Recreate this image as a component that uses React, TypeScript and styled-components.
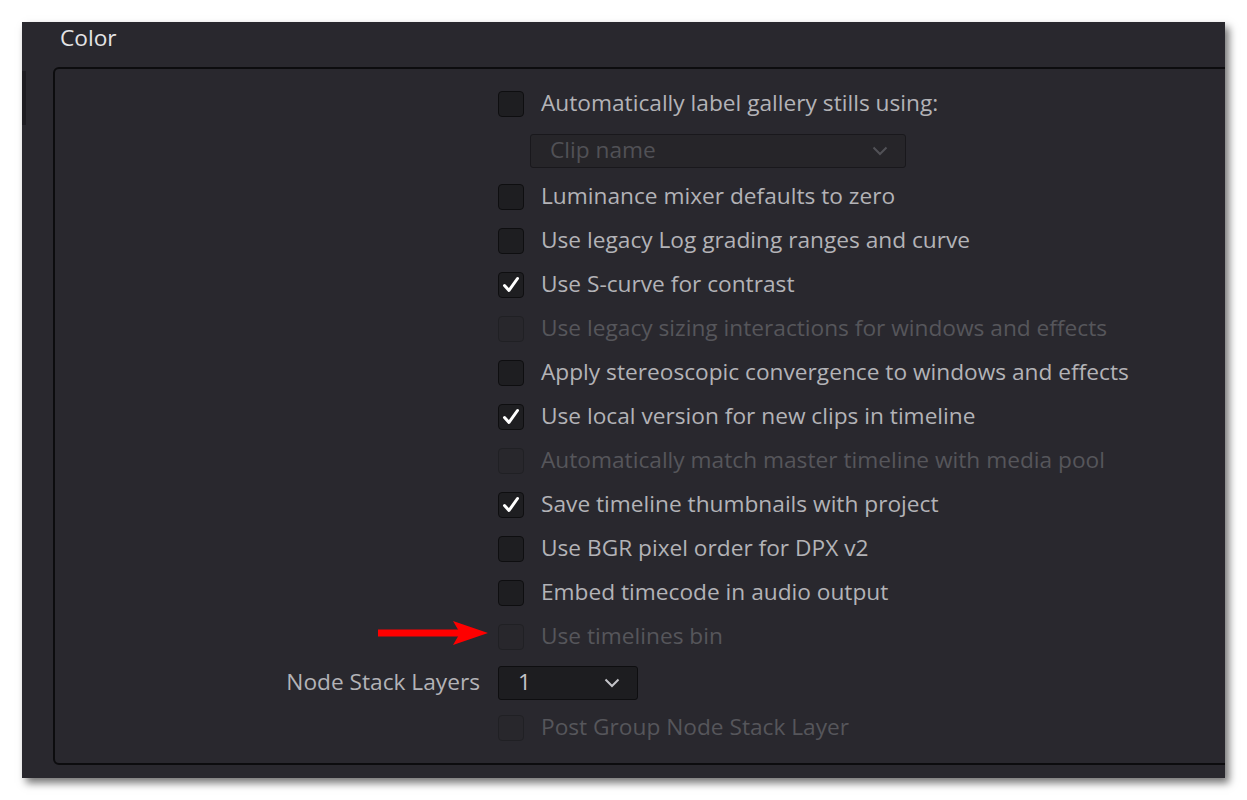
import React from "react";
import styled, { createGlobalStyle } from "styled-components";

const GlobalStyle = createGlobalStyle`
  html, body {
    margin: 0;
    padding: 0;
    background: #ffffff;
  }
  body {
    font-family: "Open Sans", "Noto Sans", sans-serif;
  }
`;

const Page = styled.div`
  width: 1247px;
  height: 800px;
  padding: 22px 0 0 22px;
  box-sizing: border-box;
`;

const Panel = styled.div`
  width: 1203px;
  height: 756px;
  background: #29282e;
  box-shadow: 4px 5px 8px rgba(0, 0, 0, 0.55);
  display: flex;
  overflow: hidden;
`;

const Strip = styled.div`
  width: 4px;
  height: 54px;
  margin-top: 49px;
  background: #1d1c21;
  flex-shrink: 0;
`;

const Main = styled.div`
  flex: 1;
  margin-left: 27px;
  display: flex;
  flex-direction: column;
`;

const Title = styled.div`
  height: 45px;
  padding-left: 7px;
  box-sizing: border-box;
  font-size: 22.7px;
  line-height: 31px;
  color: #e4e4e6;
`;

const Box = styled.div`
  width: calc(100% + 20px);
  height: 698px;
  box-sizing: border-box;
  border: 2px solid #0c0c0e;
  border-radius: 6px;
  padding-top: 13px;
  display: grid;
  grid-template-columns: 425px 1fr;
  column-gap: 18px;
  align-content: start;
`;

const Label = styled.div`
  font-size: 22.7px;
  line-height: 30px;
  color: #b3b3b7;
  text-align: right;
  align-self: center;
  margin-top: -2px;
`;

const Row = styled.div<{ $h?: number }>`
  grid-column: 2;
  height: ${(p) => p.$h ?? 44}px;
  display: flex;
  align-items: center;
  position: relative;
`;

const Tick = styled.span<{ $disabled?: boolean }>`
  width: 26px;
  height: 26px;
  box-sizing: border-box;
  border-radius: 4px;
  background: ${(p) => (p.$disabled ? "#28272c" : "#1e1e21")};
  border: 1px solid ${(p) => (p.$disabled ? "#202024" : "#0e0e10")};
  display: flex;
  align-items: center;
  justify-content: center;
  flex-shrink: 0;
`;

const Text = styled.span<{ $disabled?: boolean }>`
  margin-left: 17px;
  font-size: 22.7px;
  line-height: 30px;
  margin-top: -2px;
  white-space: nowrap;
  color: ${(p) => (p.$disabled ? "#56565b" : "#b3b3b7")};
`;

const Select = styled.div<{ $w: number; $dim?: boolean }>`
  width: ${(p) => p.$w}px;
  height: 34px;
  box-sizing: border-box;
  border: 1px solid ${(p) => (p.$dim ? "#19181c" : "#0e0e10")};
  border-radius: 3px;
  background: ${(p) => (p.$dim ? "#262529" : "#1d1d20")};
  display: flex;
  align-items: center;
  justify-content: space-between;
  padding: 0 17px 0 19px;
  font-size: 22.7px;
  line-height: 30px;
  color: ${(p) => (p.$dim ? "#515156" : "#c4c4c8")};
  span {
    margin-top: -2px;
  }
`;

const Indent = styled.div`
  margin-left: 32px;
`;

const Arrow = styled.svg`
  position: absolute;
  left: -120px;
  top: 5px;
`;

const Check = () => (
  <svg width="18" height="18" viewBox="0 0 18 18">
    <path
      d="M2.5 9.5 L7 14.5 L15.5 2.5"
      fill="none"
      stroke="#ffffff"
      strokeWidth="3"
      strokeLinecap="round"
      strokeLinejoin="round"
    />
  </svg>
);

const Chevron = ({ color }: { color: string }) => (
  <svg width="16" height="10" viewBox="0 0 16 10">
    <path d="M1.5 1.5 L8 8 L14.5 1.5" fill="none" stroke={color} strokeWidth="2" />
  </svg>
);

type Item = { label: string; checked?: boolean; disabled?: boolean };

const Option: React.FC<Item & { children?: React.ReactNode }> = ({
  label,
  checked,
  disabled,
  children,
}) => (
  <Row>
    {children}
    <Tick $disabled={disabled}>{checked && <Check />}</Tick>
    <Text $disabled={disabled}>{label}</Text>
  </Row>
);

const middle: Item[] = [
  { label: "Luminance mixer defaults to zero" },
  { label: "Use legacy Log grading ranges and curve" },
  { label: "Use S-curve for contrast", checked: true },
  { label: "Use legacy sizing interactions for windows and effects", disabled: true },
  { label: "Apply stereoscopic convergence to windows and effects" },
  { label: "Use local version for new clips in timeline", checked: true },
  { label: "Automatically match master timeline with media pool", disabled: true },
  { label: "Save timeline thumbnails with project", checked: true },
  { label: "Use BGR pixel order for DPX v2" },
  { label: "Embed timecode in audio output" },
];

export default function App() {
  return (
    <Page>
      <GlobalStyle />
      <Panel>
        <Strip />
        <Main>
          <Title>Color</Title>
          <Box>
            <Option label="Automatically label gallery stills using:" />
            <Row $h={49}>
              <Indent>
                <Select $w={376} $dim>
                  <span>Clip name</span>
                  <Chevron color="#515156" />
                </Select>
              </Indent>
            </Row>
            {middle.map((m) => (
              <Option key={m.label} {...m} />
            ))}
            <Option label="Use timelines bin" disabled>
              <Arrow width="111" height="26" viewBox="0 0 111 26">
                <path d="M0 9.5 L82 9.5 L82 16.5 L0 16.5 Z" fill="#ff0000" />
                <path d="M75 1 L110 13 L75 25 L82 13 Z" fill="#ff0000" />
              </Arrow>
            </Option>
            <Label>Node Stack Layers</Label>
            <Row $h={47}>
              <Select $w={140}>
                <span>1</span>
                <Chevron color="#c4c4c8" />
              </Select>
            </Row>
            <Option label="Post Group Node Stack Layer" disabled />
          </Box>
        </Main>
      </Panel>
    </Page>
  );
}
